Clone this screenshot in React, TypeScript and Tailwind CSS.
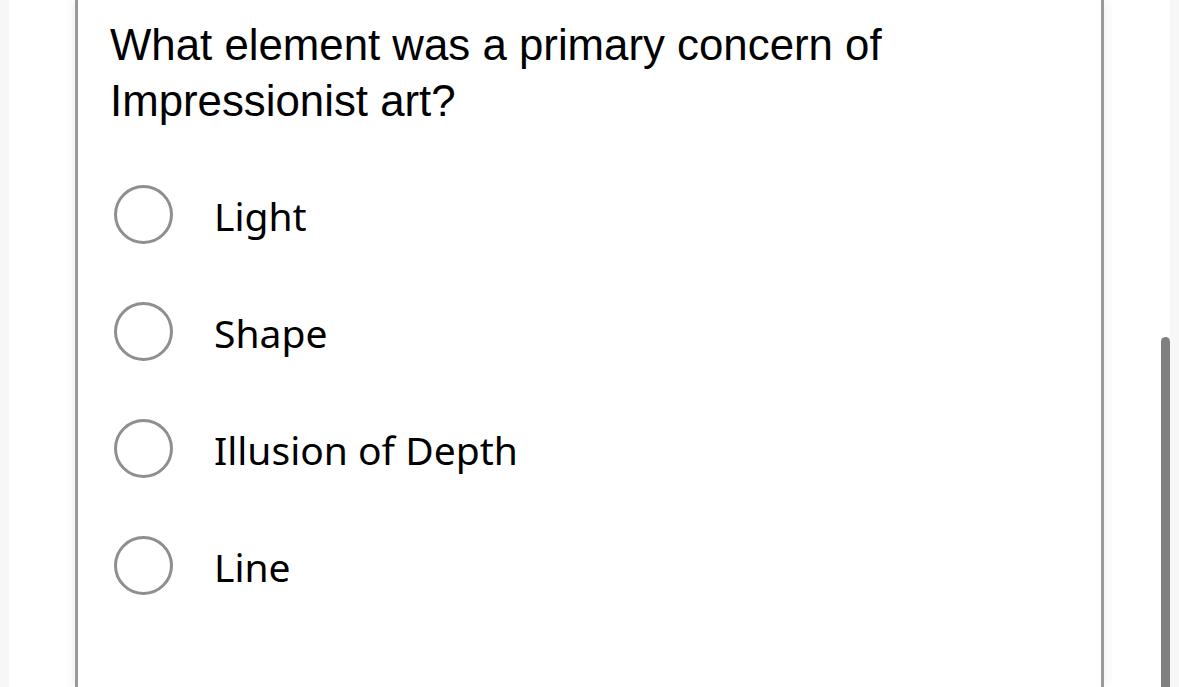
const options = ["Light", "Shape", "Illusion of Depth", "Line"];

function Radio() {
  return (
    <div className="w-[59px] h-[59px] shrink-0 rounded-full border-[3.5px] border-[#8e8e93] bg-white" />
  );
}

export default function App() {
  return (
    <div className="h-[687px] w-full overflow-hidden bg-[#f7f7f7] px-[9px]">
      <div className="relative h-full bg-white">
        {/* Question card */}
        <div className="ml-[66px] h-full w-[1029px] border-x-[3px] border-[#9a9a9a] bg-white shadow-[0_0_12px_rgba(0,0,0,0.08)]">
          <div className="pl-[32px] pt-[17px]">
            <h1 className="font-['Liberation_Sans',Arial,sans-serif] text-[43.8px] leading-[56px] text-black">
              What element was a primary concern of
              <br />
              Impressionist art?
            </h1>
          </div>

          <ul className="mt-[27px] pl-[36px]">
            {options.map((opt) => (
              <li key={opt} className="flex h-[117px] items-center gap-[41px]">
                <Radio />
                <span className="mt-[4px] font-['Noto_Sans',sans-serif] text-[39px] text-black">
                  {opt}
                </span>
              </li>
            ))}
          </ul>
        </div>

        {/* Scrollbar thumb */}
        <div className="absolute left-[1152px] top-[337px] h-[400px] w-[9px] rounded-full bg-[#808080]" />
      </div>
    </div>
  );
}
